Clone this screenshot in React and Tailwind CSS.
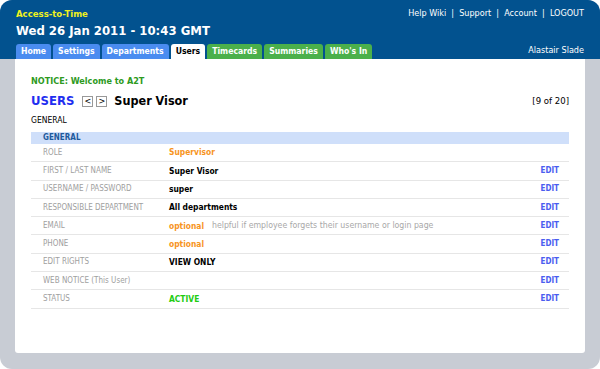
const tabs = [
  { label: "Home", color: "blue" },
  { label: "Settings", color: "blue" },
  { label: "Departments", color: "blue" },
  { label: "Users", color: "active" },
  { label: "Timecards", color: "green" },
  { label: "Summaries", color: "green" },
  { label: "Who's In", color: "green" },
];

const rows = [
  { label: "ROLE", value: "Supervisor", tone: "orange", edit: false },
  { label: "FIRST / LAST NAME", value: "Super Visor", tone: "black", edit: true },
  { label: "USERNAME / PASSWORD", value: "super", tone: "black", edit: true },
  { label: "RESPONSIBLE DEPARTMENT", value: "All departments", tone: "black", edit: true },
  { label: "EMAIL", value: "optional", tone: "orange", note: "helpful if employee forgets their username or login page", edit: true },
  { label: "PHONE", value: "optional", tone: "orange", edit: true },
  { label: "EDIT RIGHTS", value: "VIEW ONLY", tone: "black", edit: true },
  { label: "WEB NOTICE (This User)", value: "", tone: "black", edit: true },
  { label: "STATUS", value: "ACTIVE", tone: "green", edit: true },
];

const toneClass = {
  orange: "text-[#f7941d]",
  black: "text-black",
  green: "text-[#22cc11]",
};

function Tab({ label, color }) {
  const base = "h-[15px] rounded-t-[3px] px-[5px] text-[8.6px] font-bold leading-[15px]";
  if (color === "active") return <div className={`${base} bg-white text-black`}>{label}</div>;
  if (color === "green") return <div className={`${base} bg-[#4bb04b] text-white`}>{label}</div>;
  return <div className={`${base} bg-[#4a8cf0] text-white`}>{label}</div>;
}

export default function App() {
  return (
    <div className="h-[369px] w-[600px] overflow-hidden bg-white font-['DejaVu_Sans_Condensed','DejaVu_Sans',sans-serif]">
      <div className="flex h-full flex-col overflow-hidden rounded-[12px] bg-[#c8ccd4]">
        <header className="h-[59px] bg-[#02528f] px-[16px] pt-[8px]">
          <div className="flex items-start justify-between">
            <div>
              <p className="text-[9.5px] font-bold leading-[11px] text-[#f0f020]">Access-to-Time</p>
              <p className="mt-[3px] text-[13px] font-bold leading-[17px] text-white">Wed 26 Jan 2011 - 10:43 GMT</p>
            </div>
            <p className="text-[9px] leading-[11px] text-white">Help Wiki&nbsp; |&nbsp; Support&nbsp; |&nbsp; Account&nbsp; |&nbsp; LOGOUT</p>
          </div>
          <div className="mt-[5px] flex items-end justify-between">
            <div className="flex gap-[2px]">
              {tabs.map((t) => (
                <Tab key={t.label} {...t} />
              ))}
            </div>
            <p className="pb-[3px] text-[9px] leading-[11px] text-white">Alastair Slade</p>
          </div>
        </header>

        <main className="mx-[15px] h-[294px] rounded-b-[3px] bg-white px-[16px] pt-[17px]">
          <p className="text-[9px] font-bold leading-[11px] text-[#2e9a1e]">NOTICE: Welcome to A2T</p>
          <div className="mt-[4px] flex h-[20px] items-center justify-between">
            <div className="flex items-center">
              <span className="text-[13px] font-bold leading-[20px] text-[#1f2ef0]">USERS</span>
              <span className="ml-[8px] flex h-[11px] w-[11px] items-center justify-center border border-[#999] text-[9px] leading-none text-black">&lt;</span>
              <span className="ml-[3px] flex h-[11px] w-[11px] items-center justify-center border border-[#999] text-[9px] leading-none text-black">&gt;</span>
              <span className="ml-[7px] text-[12.5px] font-bold leading-[20px] text-black">Super Visor</span>
            </div>
            <span className="text-[9.5px] text-black">[9 of 20]</span>
          </div>
          <p className="mt-[3px] text-[8.5px] leading-[12px] text-black">GENERAL</p>

          <div className="mt-[6px] flex h-[12px] items-center bg-[#cfdffa] px-[12px] text-[8px] font-bold text-[#1e5a9c]">GENERAL</div>
          {rows.map((r) => (
            <div key={r.label} className="flex h-[18.3px] items-center border-b border-[#e6e6e6] pl-[12px] pr-[10px]">
              <span className="w-[126px] shrink-0 text-[8px] text-[#a0a0a0]">{r.label}</span>
              <span className={`text-[8.4px] font-bold ${toneClass[r.tone]}`}>{r.value}</span>
              {r.note && <span className="ml-[8px] text-[8.7px] text-[#a8a8a8]">{r.note}</span>}
              {r.edit && <span className="ml-auto text-[8px] font-bold text-[#4a5cf0]">EDIT</span>}
            </div>
          ))}
        </main>
      </div>
    </div>
  );
}
